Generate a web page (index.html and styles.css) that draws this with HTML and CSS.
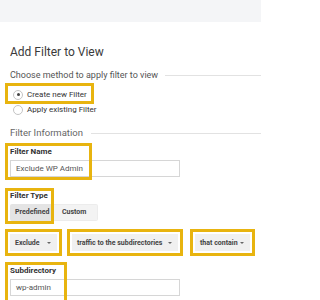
FILE: index.html
```html
<!DOCTYPE html>
<html>
<head>
<meta charset="utf-8">
<link rel="stylesheet" href="styles.css">
</head>
<body>
<div class="topbar"></div>
<div class="page">
  <h1 class="title">Add Filter to View</h1>
  <div class="section-head method"><span>Choose method to apply filter to view</span><i class="rule"></i></div>
  <div class="radios">
    <span class="hl hl-radio"></span>
    <label class="radio-row"><span class="radio checked"></span>Create new Filter</label>
    <label class="radio-row"><span class="radio"></span>Apply existing Filter</label>
  </div>
  <div class="section-head info"><span>Filter Information</span><i class="rule"></i></div>
  <div class="field name-field">
    <span class="hl hl-name"></span>
    <div class="label">Filter Name</div>
    <div class="input">Exclude WP Admin</div>
  </div>
  <div class="field type-field">
    <span class="hl hl-type"></span>
    <div class="label">Filter Type</div>
    <div class="toggle">
      <span class="tbtn active">Predefined</span><span class="tbtn">Custom</span>
    </div>
  </div>
  <div class="selects">
    <div class="sel-hl w1"><div class="select"><span>Exclude</span><span class="caret"></span></div></div>
    <div class="sel-hl w2"><div class="select"><span>traffic to the subdirectories</span><span class="caret"></span></div></div>
    <div class="sel-hl w3"><div class="select"><span>that contain</span><span class="caret"></span></div></div>
  </div>
  <div class="field sub-field">
    <span class="hl hl-sub"></span>
    <div class="label">Subdirectory</div>
    <div class="input">wp-admin</div>
  </div>
</div>
</body>
</html>
```
FILE: styles.css
```css
html, body { margin: 0; padding: 0; background: #fff; }
body { font-family: Roboto, "Noto Sans", Arial, sans-serif; color: #333; width: 261px; height: 300px; overflow: hidden; }
.topbar { height: 22px; background: #f4f5f7; }
.title { margin: 23px 0 0 10px; font-size: 12px; line-height: 15px; font-weight: 400; color: #3a3a3a; white-space: nowrap; }
.section-head { display: flex; align-items: center; margin-left: 10px; color: #555; white-space: nowrap; }
.section-head .rule { flex: 1; height: 1px; background: #e2e2e2; margin-left: 7px; }
.method { margin-top: 9px; font-size: 9px; line-height: 12px; }
.radios { position: relative; margin-top: 2px; padding-top: 4px; }
.hl { position: absolute; border: 3px solid #e8b40f; box-sizing: border-box; z-index: 1; }
.hl-radio { left: 5px; top: 0; width: 89px; height: 21px; }
.radio-row { display: flex; align-items: center; height: 15px; padding-left: 13px; font-size: 8px; color: #333; white-space: nowrap; }
.radio { width: 8px; height: 8px; border: 1px solid #c4c4c4; border-radius: 50%; margin-right: 4px; display: flex; align-items: center; justify-content: center; }
.radio.checked::after { content: ""; width: 3px; height: 3px; border-radius: 50%; background: #444; }
.info { margin-top: 9px; font-size: 9.5px; line-height: 14px; color: #666; }
.info .rule { margin-left: 8px; }
.field { position: relative; padding-left: 10px; }
.label { font-size: 8px; line-height: 12px; font-weight: 700; color: #333; white-space: nowrap; }
.input { width: 170px; height: 17px; box-sizing: border-box; border: 1px solid #d6d6d6; margin-top: 2px; padding-left: 5px; font-size: 8px; line-height: 15px; color: #555; white-space: nowrap; }
.name-field { margin-top: 3px; padding-top: 3px; height: 34px; }
.hl-name { left: 5px; top: 0; width: 87px; height: 37px; }
.type-field { margin-top: 8px; padding-top: 2px; height: 33px; }
.hl-type { left: 5px; top: 0; width: 49px; height: 36px; }
.toggle { display: flex; margin-top: 2px; }
.tbtn { height: 17px; line-height: 17px; font-size: 7px; font-weight: 700; color: #444; background: #f3f3f3; white-space: nowrap; box-sizing: border-box; }
.tbtn.active { background: #e4e4e4; width: 43px; padding-left: 5px; border-radius: 2px 0 0 2px; }
.tbtn:last-child { width: 45px; padding-left: 9px; border: 1px solid #ececec; border-left: 0; line-height: 15px; border-radius: 0 2px 2px 0; }
.selects { display: flex; margin-top: 6px; padding-left: 5px; }
.sel-hl { border: 3px solid #e8b40f; padding: 2px; height: 27px; box-sizing: border-box; flex: none; }
.w1 { width: 57px; margin-right: 5px; }
.w2 { width: 116px; margin-right: 7px; }
.w3 { width: 65px; }
.select { display: flex; align-items: center; justify-content: space-between; height: 17px; background: #f0f0f0; font-size: 7px; font-weight: 700; color: #444; padding: 0 5px; white-space: nowrap; }
.caret { width: 0; height: 0; border-left: 2px solid transparent; border-right: 2px solid transparent; border-top: 2px solid #666; margin-right: 1px; }
.sub-field { margin-top: 6px; padding-top: 3px; height: 36px; }
.hl-sub { left: 5px; top: 0; width: 62px; height: 44px; }
```
